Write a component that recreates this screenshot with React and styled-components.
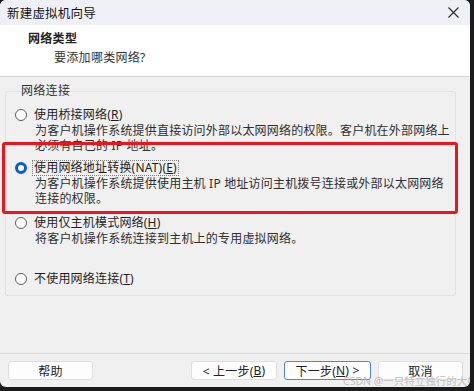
import styled, { createGlobalStyle } from "styled-components";

const GlobalStyle = createGlobalStyle`
  html, body {
    margin: 0;
    padding: 0;
    background: #1b1b1b;
  }
  body {
    font-family: "Noto Sans", "Noto Sans CJK SC", sans-serif;
    width: 474px;
    height: 391px;
    overflow: hidden;
  }
`;

const Window = styled.div`
  position: relative;
  width: 470px;
  height: 387px;
  border-radius: 6px;
  overflow: hidden;
  display: flex;
  flex-direction: column;
  background: #f0f0f0;
`;

const TitleBar = styled.div`
  height: 25px;
  flex: none;
  display: flex;
  align-items: center;
  justify-content: space-between;
  padding: 0 11px 0 7px;
  background: #eff0f5;
  font-size: 12.5px;
  color: #111;
  letter-spacing: 0.2px;
`;

const CloseIcon = () => (
  <svg width="11" height="11" viewBox="0 0 11 11">
    <path d="M0.5 0.5 L10.5 10.5 M10.5 0.5 L0.5 10.5" stroke="#2a2a2a" strokeWidth="1.1" />
  </svg>
);

const Header = styled.div`
  height: 52px;
  flex: none;
  box-sizing: border-box;
  background: #fff;
  border-bottom: 1px solid #d6d6d6;
  padding: 6px 0 0 28px;
`;

const Heading = styled.div`
  font-size: 12px;
  line-height: 16px;
  font-weight: 700;
  color: #222;
  letter-spacing: 0.3px;
`;

const SubHeading = styled.div`
  margin: 3px 0 0 26px;
  font-size: 12px;
  line-height: 16px;
  color: #333;
  letter-spacing: 0.3px;
`;

const Body = styled.div`
  flex: 1;
  display: flex;
  flex-direction: column;
`;

const Group = styled.fieldset`
  margin: 6px 14px 0 5px;
  padding: 8px 0 8px 9px;
  border: 1px solid #e2e2e2;
  border-radius: 2px;
  min-width: 0;
`;

const Legend = styled.legend`
  margin-left: 5px;
  padding: 0 1px;
  font-size: 12px;
  line-height: 16px;
  color: #333;
  letter-spacing: 0.3px;
`;

const Option = styled.div`
  height: ${(p) => p.$h}px;
`;

const Row = styled.div`
  display: flex;
  align-items: center;
  height: 16px;
  gap: 5px;
  font-size: 12px;
  color: #1e1e1e;
  letter-spacing: 0.2px;
`;

const Radio = styled.span`
  width: 12px;
  height: 12px;
  flex: none;
  box-sizing: border-box;
  border-radius: 50%;
  border: ${(p) => (p.$checked ? "3.5px solid #0a5bd1" : "1px solid #5b5b5b")};
  background: #fff;
`;

const Label = styled.span`
  padding: 0 1px;
  line-height: 14px;
  border: 1px dotted ${(p) => (p.$focused ? "#7a7a7a" : "transparent")};
`;

const Desc = styled.div`
  margin: 1px 0 0 20px;
  font-size: 12px;
  line-height: 14px;
  color: #2e2e2e;
  letter-spacing: 0.2px;
`;

const Footer = styled.div`
  flex: none;
  display: flex;
  align-items: center;
  gap: 7px;
  padding: 7px 7px 7px 8px;
  border-top: 1px solid #dcdcdc;
`;

const Button = styled.div`
  width: ${(p) => p.$w || 85}px;
  height: 19px;
  box-sizing: border-box;
  display: flex;
  align-items: center;
  justify-content: center;
  background: #fdfdfd;
  border: 1px solid ${(p) => (p.$primary ? "#4f86d9" : "#dedede")};
  border-radius: 3px;
  font-size: 12px;
  color: #222;
  letter-spacing: 0.2px;
`;

const Spacer = styled.div`
  flex: 1;
`;

const Highlight = styled.div`
  position: absolute;
  left: 2px;
  top: 142px;
  width: 456px;
  height: 72px;
  box-sizing: border-box;
  border: 3px solid #e8161d;
  border-radius: 3px;
  pointer-events: none;
`;

const Watermark = styled.div`
  position: absolute;
  left: 343px;
  top: 374px;
  font-size: 10.5px;
  line-height: 14px;
  color: rgba(185, 185, 185, 0.9);
  white-space: nowrap;
`;

const options = [
  {
    label: <>使用桥接网络(<u>R</u>)</>,
    desc: ["为客户机操作系统提供直接访问外部以太网网络的权限。客户机在外部网络上", "必须有自己的 IP 地址。"],
    h: 53,
  },
  {
    label: <>使用网络地址转换(NAT)(<u>E</u>)</>,
    desc: ["为客户机操作系统提供使用主机 IP 地址访问主机拨号连接或外部以太网网络", "连接的权限。"],
    h: 55,
    checked: true,
  },
  {
    label: <>使用仅主机模式网络(<u>H</u>)</>,
    desc: ["将客户机操作系统连接到主机上的专用虚拟网络。"],
    h: 56,
  },
  {
    label: <>不使用网络连接(<u>T</u>)</>,
    desc: [],
    h: 16,
  },
];

export default function App() {
  return (
    <>
      <GlobalStyle />
      <Window>
        <TitleBar>
          <span>新建虚拟机向导</span>
          <CloseIcon />
        </TitleBar>
        <Header>
          <Heading>网络类型</Heading>
          <SubHeading>要添加哪类网络?</SubHeading>
        </Header>
        <Body>
          <Group>
            <Legend>网络连接</Legend>
            {options.map((o, i) => (
              <Option key={i} $h={o.h}>
                <Row>
                  <Radio $checked={o.checked} />
                  <Label $focused={o.checked}>{o.label}</Label>
                </Row>
                {o.desc.map((d) => (
                  <Desc key={d}>{d}</Desc>
                ))}
              </Option>
            ))}
          </Group>
        </Body>
        <Footer>
          <Button>帮助</Button>
          <Spacer />
          <Button $w={86}>&lt; 上一步(<u>B</u>)</Button>
          <Button $w={87} $primary>下一步(<u>N</u>) &gt;</Button>
          <Button>取消</Button>
        </Footer>
        <Highlight />
        <Watermark>CSDN @一只特立独行的大蜗牛</Watermark>
      </Window>
    </>
  );
}
